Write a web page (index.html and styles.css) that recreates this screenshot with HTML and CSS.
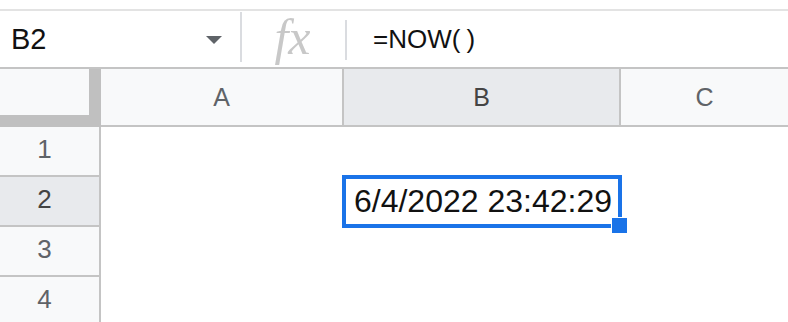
FILE: index.html
```html
<!DOCTYPE html>
<html>
<head>
<meta charset="utf-8">
<link rel="stylesheet" href="styles.css">
</head>
<body>
<div class="sheet">
  <div class="topstrip"></div>
  <div class="fbar">
    <div class="namebox">
      <span class="ref">B2</span>
      <span class="caret"></span>
    </div>
    <div class="sep sep-a"></div>
    <div class="fx">fx</div>
    <div class="sep sep-b"></div>
    <div class="formula">=NOW<span class="paren">(</span>)</div>
  </div>
  <div class="row hdr">
    <div class="corner"><div class="corner-in"></div></div>
    <div class="ch col-a">A</div>
    <div class="ch col-b sel">B</div>
    <div class="ch col-c">C</div>
  </div>
  <div class="row">
    <div class="rh">1</div>
    <div class="cell col-a"></div>
    <div class="cell col-b"></div>
    <div class="cell col-c"></div>
  </div>
  <div class="row">
    <div class="rh sel">2</div>
    <div class="cell col-a"></div>
    <div class="cell col-b active">
      <span class="val">6/4/2022 23:42:29</span>
      <div class="selbox"></div>
      <div class="handle"></div>
    </div>
    <div class="cell col-c"></div>
  </div>
  <div class="row">
    <div class="rh">3</div>
    <div class="cell col-a"></div>
    <div class="cell col-b"></div>
    <div class="cell col-c"></div>
  </div>
  <div class="row last">
    <div class="rh">4</div>
    <div class="cell col-a"></div>
    <div class="cell col-b"></div>
    <div class="cell col-c"></div>
  </div>
</div>
</body>
</html>
```

FILE: styles.css
```css
* { box-sizing: border-box; }
html, body { margin: 0; padding: 0; background: #fff; }
body { font-family: "Liberation Sans", Arial, sans-serif; overflow: hidden; }

.sheet { width: 788px; height: 322px; overflow: hidden; }

.topstrip { height: 11px; border-bottom: 2px solid #e3e3e3; }

.fbar {
  display: flex;
  align-items: center;
  height: 58px;
  border-bottom: 2px solid #c4c4c4;
}
.namebox {
  width: 240px;
  height: 100%;
  display: flex;
  align-items: center;
  justify-content: space-between;
  padding: 0 18px 0 11px;
}
.ref { font-size: 29px; color: #111; }
.caret {
  width: 0; height: 0;
  border-left: 8px solid transparent;
  border-right: 8px solid transparent;
  border-top: 8px solid #5f6368;
  margin-top: 2px;
}
.sep { width: 2px; background: #dadce0; align-self: flex-start; }
.sep-a { height: 50px; margin-top: 1px; }
.sep-b { height: 40px; margin-top: 9px; }
.fx {
  width: 103px;
  text-align: center;
  font-family: "Liberation Serif", "Times New Roman", serif;
  font-style: italic;
  font-size: 50px;
  color: #c8c8c8;
  line-height: 1;
  padding-right: 2px;
  padding-bottom: 4px;
}
.formula { padding-left: 26px; font-size: 26px; color: #111; }
.paren { margin-right: 6px; }

.row { display: flex; height: 50px; }
.row.hdr { height: 58px; }

.corner {
  width: 101px;
  height: 58px;
  background: #c0c0c0;
}
.corner-in { width: 89px; height: 46px; background: #f8f9fa; }

.ch {
  height: 58px;
  background: #f8f9fa;
  border-bottom: 2px solid #c4c4c4;
  border-right: 2px solid #c4c4c4;
  display: flex;
  align-items: center;
  justify-content: center;
  font-size: 25px;
  color: #5f6368;
}
.ch.sel { background: #e8eaed; color: #444; }

.col-a { width: 243px; }
.col-b { width: 277px; }
.col-c { flex: 1; }
.ch.col-c { border-right: none; }

.rh {
  width: 101px;
  height: 50px;
  background: #f8f9fa;
  border-right: 2px solid #c4c4c4;
  border-bottom: 2px solid #c4c4c4;
  display: flex;
  align-items: center;
  justify-content: center;
  padding-right: 10px;
  padding-bottom: 4px;
  font-size: 26px;
  color: #5f6368;
}
.rh.sel { background: #e8eaed; color: #444; }

.cell { height: 50px; }
.cell.active {
  position: relative;
  display: flex;
  align-items: center;
  justify-content: flex-end;
  padding-right: 9px;
  padding-bottom: 2px;
}
.val {
  font-size: 32px;
  color: #111;
  white-space: nowrap;
}
.selbox {
  position: absolute;
  left: -2px;
  top: -2px;
  width: 280px;
  height: 53px;
  border: 4px solid #1a73e8;
}
.handle {
  position: absolute;
  left: 267px;
  top: 40px;
  width: 17px;
  height: 17px;
  background: #1a73e8;
  border: 1px solid #fff;
}
```
